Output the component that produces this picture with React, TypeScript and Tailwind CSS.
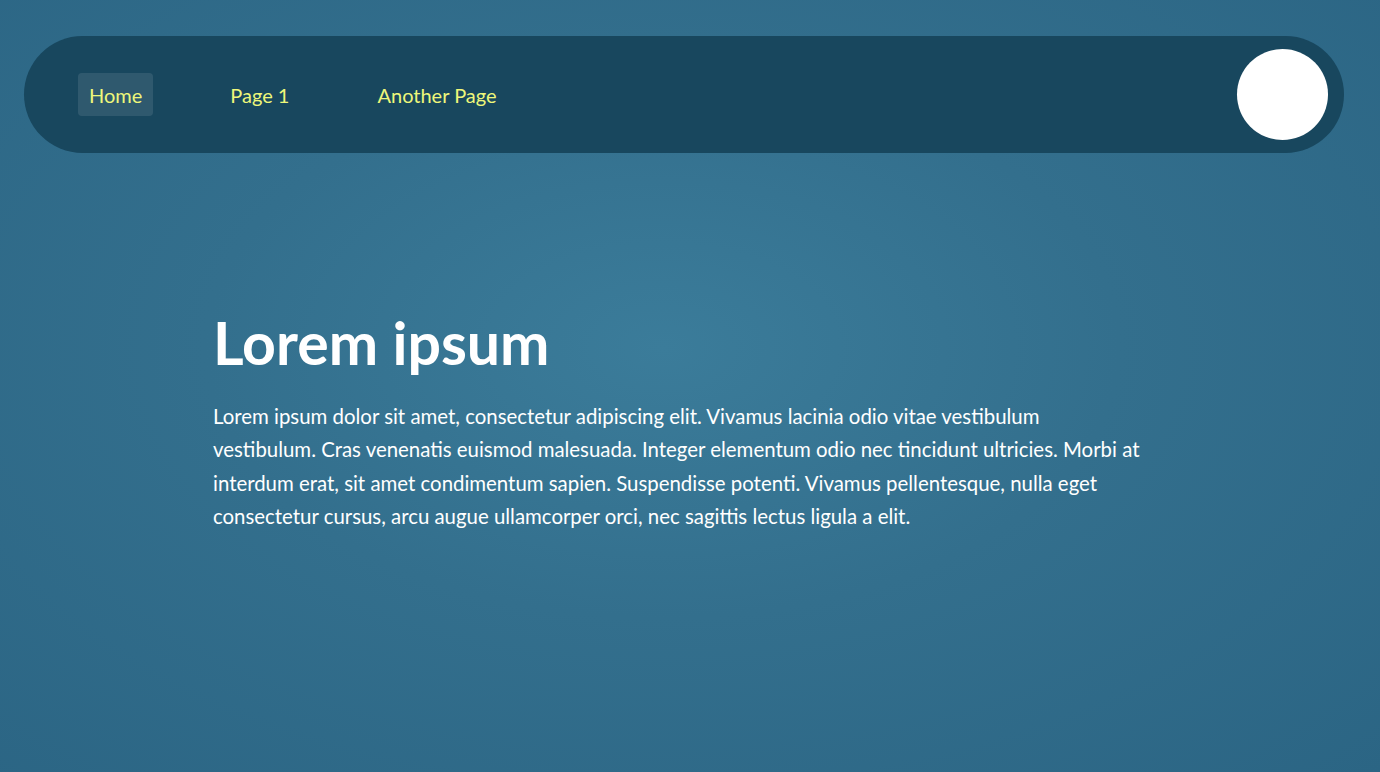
const links = ["Home", "Page 1", "Another Page"];

const lines = [
  "Lorem ipsum dolor sit amet, consectetur adipiscing elit. Vivamus lacinia odio vitae vestibulum",
  "vestibulum. Cras venenatis euismod malesuada. Integer elementum odio nec tincidunt ultricies. Morbi at",
  "interdum erat, sit amet condimentum sapien. Suspendisse potenti. Vivamus pellentesque, nulla eget",
  "consectetur cursus, arcu augue ullamcorper orci, nec sagittis lectus ligula a elit.",
];

export default function App() {
  return (
    <div
      className="min-h-[772px] w-full bg-[radial-gradient(ellipse_at_48%_45%,#3b7c9a_0%,#336f8d_45%,#2b6584_100%)] pl-6 pr-9 pt-9 text-white"
      style={{ fontFamily: "Lato, 'Noto Sans', sans-serif" }}
    >
      <nav className="flex h-[117px] items-center justify-between rounded-full bg-[#18475e] pl-[54px] pr-4">
        <ul className="flex items-center gap-[66px]">
          {links.map((label, i) => (
            <li key={label}>
              <a
                href="#"
                className={`flex h-[43px] items-center rounded px-[11px] text-[20px] text-[#eef77a] ${
                  i === 0 ? "bg-white/10" : ""
                }`}
              >
                {label}
              </a>
            </li>
          ))}
        </ul>
        <div className="h-[91px] w-[91px] rounded-full bg-white" />
      </nav>

      <main className="ml-[189px] w-[960px] pt-[158px]">
        <h1 className="text-[59px] font-bold leading-[1.1]">Lorem ipsum</h1>
        <p className="mt-[24px] text-[20.4px] leading-[33.5px]">
          {lines.map((line) => (
            <span key={line} className="block whitespace-nowrap">
              {line}
            </span>
          ))}
        </p>
      </main>
    </div>
  );
}
